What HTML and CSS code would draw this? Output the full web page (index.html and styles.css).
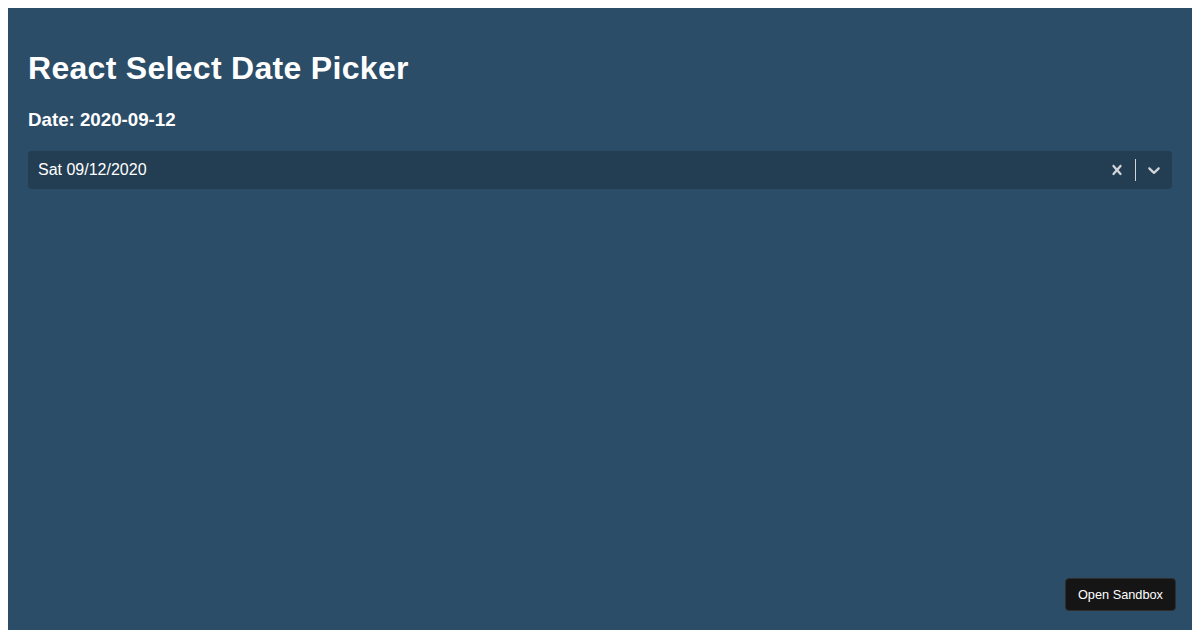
FILE: index.html
```html
<!DOCTYPE html>
<html lang="en">
<head>
<meta charset="utf-8">
<title>React Select Date Picker</title>
<link rel="stylesheet" href="styles.css">
</head>
<body>
<div class="app">
  <h1 class="title">React Select Date Picker</h1>
  <h3 class="date-label">Date: 2020-09-12</h3>
  <div class="select">
    <div class="select-value">Sat 09/12/2020</div>
    <div class="indicators">
      <div class="indicator">
        <svg viewBox="0 0 20 20" width="20" height="20" aria-hidden="true"><path d="M14.348 14.849c-0.469 0.469-1.229 0.469-1.697 0l-2.651-3.030-2.651 3.029c-0.469 0.469-1.229 0.469-1.697 0-0.469-0.469-0.469-1.229 0-1.697l2.758-3.15-2.759-3.152c-0.469-0.469-0.469-1.228 0-1.697s1.228-0.469 1.697 0l2.652 3.031 2.651-3.031c0.469-0.469 1.228-0.469 1.697 0s0.469 1.229 0 1.697l-2.758 3.152 2.758 3.15c0.469 0.469 0.469 1.229 0 1.698z"/></svg>
      </div>
      <span class="separator"></span>
      <div class="indicator">
        <svg viewBox="0 0 20 20" width="20" height="20" aria-hidden="true"><path d="M4.516 7.548c0.436-0.446 1.043-0.481 1.576 0l3.908 3.747 3.908-3.747c0.533-0.481 1.141-0.446 1.574 0 0.436 0.445 0.408 1.197 0 1.615-0.406 0.418-4.695 4.502-4.695 4.502-0.217 0.223-0.502 0.335-0.787 0.335s-0.57-0.112-0.789-0.335c0 0-4.287-4.084-4.695-4.502s-0.436-1.17 0-1.615z"/></svg>
      </div>
    </div>
  </div>
</div>
<a class="sandbox-btn" href="#">Open Sandbox</a>
</body>
</html>
```

FILE: styles.css
```css
html, body {
  height: 100%;
}
body {
  margin: 8px 8px 0 8px;
  background: #ffffff;
  font-family: "Liberation Sans", Arial, Helvetica, sans-serif;
  overflow: hidden;
}
.app {
  box-sizing: border-box;
  height: calc(100vh - 8px);
  background: #2c4d68;
  color: #ffffff;
  padding: 20px;
  display: flow-root;
}
.title {
  font-size: 32px;
  font-weight: bold;
  letter-spacing: 0.3px;
  margin: 21.5px 0 22.5px 0;
  line-height: normal;
}
.date-label {
  font-size: 18.72px;
  font-weight: bold;
  margin: 0 0 19.5px 0;
  line-height: normal;
}
.select {
  display: flex;
  align-items: center;
  min-height: 38px;
  box-sizing: border-box;
  background: #233d52;
  border-radius: 4px;
}
.select-value {
  flex: 1;
  padding: 2px 8px;
  margin-left: 2px;
  font-size: 16px;
  color: #ffffff;
}
.indicators {
  display: flex;
  align-items: stretch;
  align-self: stretch;
}
.indicator {
  display: flex;
  align-items: center;
  padding: 8px;
  color: #d2d5d8;
}
.indicator svg {
  display: block;
  fill: currentColor;
}
.separator {
  width: 1px;
  margin: 8px 0;
  background: #d2d5d8;
}
.sandbox-btn {
  position: fixed;
  right: 24px;
  bottom: 19px;
  box-sizing: border-box;
  height: 33px;
  padding: 0 12px;
  display: flex;
  align-items: center;
  background: #151515;
  border: 1px solid #2e2e2e;
  border-radius: 4px;
  color: #ffffff;
  font-size: 12.75px;
  text-decoration: none;
  font-family: "Liberation Sans", Arial, Helvetica, sans-serif;
}
```
